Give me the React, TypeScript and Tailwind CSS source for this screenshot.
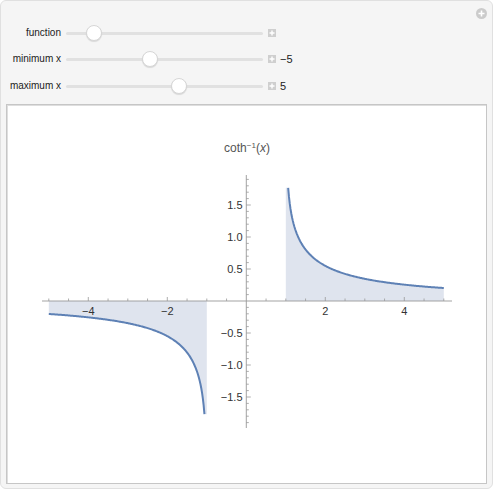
import React from "react";

const X0 = 246.3;
const SX = 39.5;
const Y0 = 301;
const SY = 64;
const px = (x: number) => X0 + x * SX;
const py = (y: number) => Y0 - y * SY;
const acoth = (x: number) => 0.5 * Math.log((x + 1) / (x - 1));

function curvePts(a: number, b: number, n = 200) {
  const pts: [number, number][] = [];
  for (let i = 0; i <= n; i++) {
    const t = i / n;
    const x = a + (b - a) * t;
    pts.push([px(x), py(acoth(x))]);
  }
  return pts;
}

function Slider({ label, left, value }: { label: string; left: number; value?: string }) {
  return (
    <div className="flex items-center h-[26px]">
      <div className="w-[60px] text-right text-[10px] text-[#222] leading-none">{label}</div>
      <div className="relative ml-[5px] w-[197px] h-[3px] rounded-full bg-[#e1e1e1]">
        <div
          className="absolute top-1/2 -translate-y-1/2 w-[16px] h-[16px] rounded-full bg-white border border-[#d6d6d6] shadow-[0_1px_1px_rgba(0,0,0,0.12)]"
          style={{ left }}
        />
      </div>
      <div className="ml-[5px] w-[8px] h-[8px] bg-[#cfcfcf] flex items-center justify-center">
        <svg width="8" height="8" viewBox="0 0 8 8">
          <path d="M4 1.5v5M1.5 4h5" stroke="#fff" strokeWidth="1.4" />
        </svg>
      </div>
      {value && <div className="ml-[4px] text-[11px] text-[#222] leading-none">{value}</div>}
    </div>
  );
}

function Plot() {
  const right = curvePts(1.06, 5);
  const left = curvePts(-5, -1.06);
  const toPath = (p: [number, number][]) => p.map((q, i) => `${i ? "L" : "M"}${q[0].toFixed(2)},${q[1].toFixed(2)}`).join(" ");
  const fillR =
    `M${px(1)},${Y0} L${px(1)},${right[0][1]} ` + right.map((q) => `L${q[0].toFixed(2)},${q[1].toFixed(2)}`).join(" ") + ` L${px(5)},${Y0} Z`;
  const fillL =
    `M${px(-5)},${Y0} ` + left.map((q) => `L${q[0].toFixed(2)},${q[1].toFixed(2)}`).join(" ") + ` L${px(-1)},${left[left.length - 1][1]} L${px(-1)},${Y0} Z`;

  const xTicks: React.ReactNode[] = [];
  for (let k = -10; k <= 10; k++) {
    if (k === 0) continue;
    const v = k / 2;
    const major = k % 4 === 0;
    const x = px(v);
    xTicks.push(<line key={"xt" + k} x1={x} x2={x} y1={Y0} y2={Y0 - (major ? 4 : 2.5)} stroke="#999" strokeWidth="0.8" />);
  }
  const yTicks: React.ReactNode[] = [];
  for (let k = -19; k <= 19; k++) {
    if (k === 0) continue;
    const v = k / 10;
    const major = k % 5 === 0;
    const y = py(v);
    yTicks.push(<line key={"yt" + k} x1={X0} x2={X0 + (major ? 4.5 : 2.5)} y1={y} y2={y} stroke="#999" strokeWidth="0.8" />);
  }
  const xLabels = [-4, -2, 2, 4];
  const yLabels = [-1.5, -1, -0.5, 0.5, 1, 1.5];
  const fmt = (v: number) => (v < 0 ? "\u2212" : "") + Math.abs(v).toFixed(1);
  const fmtX = (v: number) => (v < 0 ? "\u2212" : "") + Math.abs(v);

  return (
    <svg width="480" height="378" viewBox="7 105 480 378" className="block" style={{ fontFamily: "'Liberation Sans', Arial, sans-serif" }}>
      <path d={fillR} fill="#dfe4ee" />
      <path d={fillL} fill="#dfe4ee" />
      <line x1={42} x2={452} y1={Y0} y2={Y0} stroke="#999" strokeWidth="0.9" />
      <line x1={X0} x2={X0} y1={175} y2={428} stroke="#999" strokeWidth="0.9" />
      {xTicks}
      {yTicks}
      <path d={toPath(right)} fill="none" stroke="#5e81b5" strokeWidth="2" />
      <path d={toPath(left)} fill="none" stroke="#5e81b5" strokeWidth="2" />
      {xLabels.map((v) => (
        <text key={"xl" + v} x={px(v)} y={315} fontSize="11" fill="#333" textAnchor="middle">
          {fmtX(v)}
        </text>
      ))}
      {yLabels.map((v) => (
        <text key={"yl" + v} x={242.5} y={py(v) + 4} fontSize="11" fill="#333" textAnchor="end">
          {fmt(v)}
        </text>
      ))}
      <text x={247} y={152} fontSize="12" fill="#555" textAnchor="middle">
        coth
        <tspan dy="-4" fontSize="8">
          {"\u22121"}
        </tspan>
        <tspan dy="4">(</tspan>
        <tspan fontStyle="italic">x</tspan>
        <tspan>)</tspan>
      </text>
    </svg>
  );
}

export default function App() {
  return (
    <div className="w-[494px] h-[490px] bg-white" style={{ fontFamily: "'Liberation Sans', Arial, sans-serif" }}>
      <div className="relative w-[493px] h-[489px] rounded-[6px] border border-[#e0e0e0] bg-[#f5f5f5] pt-[19px]">
        <div className="absolute left-[475px] top-[7px] w-[11px] h-[11px] rounded-full bg-[#cbcbcb] flex items-center justify-center">
          <svg width="11" height="11" viewBox="0 0 11 11">
            <path d="M5.5 2.5v6M2.5 5.5h6" stroke="#fff" strokeWidth="1.6" />
          </svg>
        </div>
        <Slider label="function" left={20} />
        <Slider label="minimum x" left={76} value={"\u22125"} />
        <div className="mt-px">
          <Slider label="maximum x" left={105} value="5" />
        </div>
        <div className="mx-[5px] mt-[5px] h-[380px] border border-[#c6c6c6] bg-white shadow-[inset_1px_1px_0_#dedede]">
          <Plot />
        </div>
      </div>
    </div>
  );
}
